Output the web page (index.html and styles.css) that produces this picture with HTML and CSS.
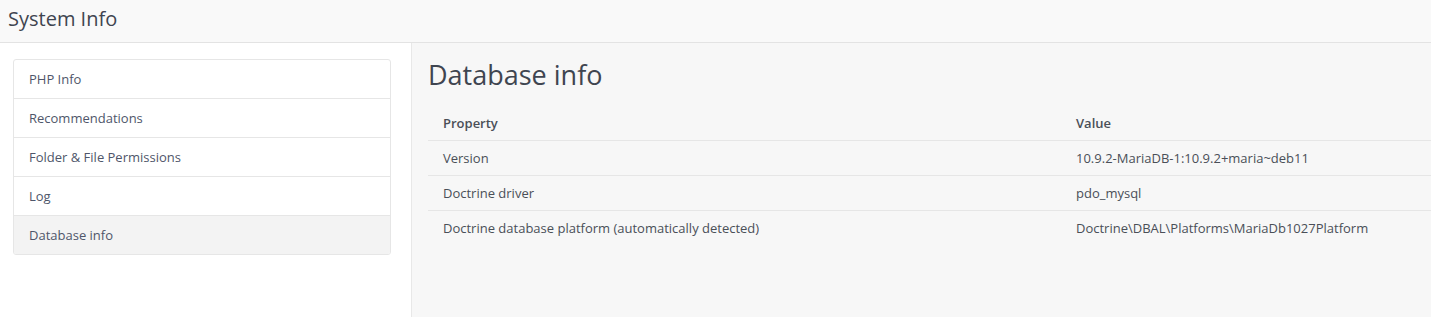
FILE: index.html
```html
<!DOCTYPE html>
<html lang="en">
<head>
<meta charset="utf-8">
<title>System Info</title>
<link rel="stylesheet" href="styles.css">
</head>
<body>
<header class="topbar">
  <h1 class="page-title">System Info</h1>
</header>
<div class="layout">
  <aside class="sidebar">
    <nav class="list-group">
      <a class="list-item" href="#">PHP Info</a>
      <a class="list-item" href="#">Recommendations</a>
      <a class="list-item" href="#">Folder &amp; File Permissions</a>
      <a class="list-item" href="#">Log</a>
      <a class="list-item active" href="#">Database info</a>
    </nav>
  </aside>
  <main class="content">
    <h2 class="section-title">Database info</h2>
    <table class="info-table">
      <thead>
        <tr><th class="col-prop">Property</th><th>Value</th></tr>
      </thead>
      <tbody>
        <tr><td>Version</td><td>10.9.2-MariaDB-1:10.9.2+maria~deb11</td></tr>
        <tr><td>Doctrine driver</td><td>pdo_mysql</td></tr>
        <tr><td>Doctrine database platform (automatically detected)</td><td>Doctrine\DBAL\Platforms\MariaDb1027Platform</td></tr>
      </tbody>
    </table>
  </main>
</div>
</body>
</html>
```
FILE: styles.css
```css
* { box-sizing: border-box; }
html, body { height: 100%; }
body {
  margin: 0;
  font-family: "Open Sans", "Noto Sans", sans-serif;
  font-size: 13px;
  color: #4a4f57;
  background: #fff;
  display: flex;
  flex-direction: column;
}
.topbar {
  height: 43px;
  background: #f9f9f9;
  border-bottom: 1px solid #e3e3e3;
  padding: 0 8px;
  display: flex;
  align-items: center;
}
.page-title {
  margin: 0;
  font-size: 20px;
  font-weight: 400;
  color: #3f4550;
  line-height: 1;
  padding-bottom: 4px;
}
.layout {
  flex: 1;
  display: flex;
}
.sidebar {
  width: 412px;
  flex: 0 0 412px;
  background: #fff;
  border-right: 1px solid #e8e8e8;
  padding: 16px 20px 0 13px;
}
.list-group {
  display: flex;
  flex-direction: column;
  border: 1px solid #e6e6e6;
  border-radius: 3px;
  overflow: hidden;
}
.list-item {
  display: flex;
  align-items: center;
  height: 39px;
  padding: 0 15px;
  color: #4f566a;
  text-decoration: none;
  border-top: 1px solid #e6e6e6;
}
.list-item:first-child { border-top: 0; height: 38px; }
.list-item.active { background: #f3f3f3; }
.content {
  flex: 1;
  background: #f7f7f7;
  padding: 0 0 0 16px;
  overflow: hidden;
}
.section-title {
  margin: 16px 0 15px;
  font-size: 27px;
  font-weight: 400;
  color: #3f4550;
  line-height: 1.2;
}
.info-table {
  width: 1010px;
  border-collapse: collapse;
}
.info-table th,
.info-table td {
  text-align: left;
  padding: 0 15px;
  height: 35px;
}
.info-table th { font-weight: 600; color: #4a4f57; height: 34px; border-bottom: 1px solid #e6e6e6; }
.info-table tbody tr + tr td { border-top: 1px solid #e6e6e6; }
.col-prop { width: 633px; }
```
